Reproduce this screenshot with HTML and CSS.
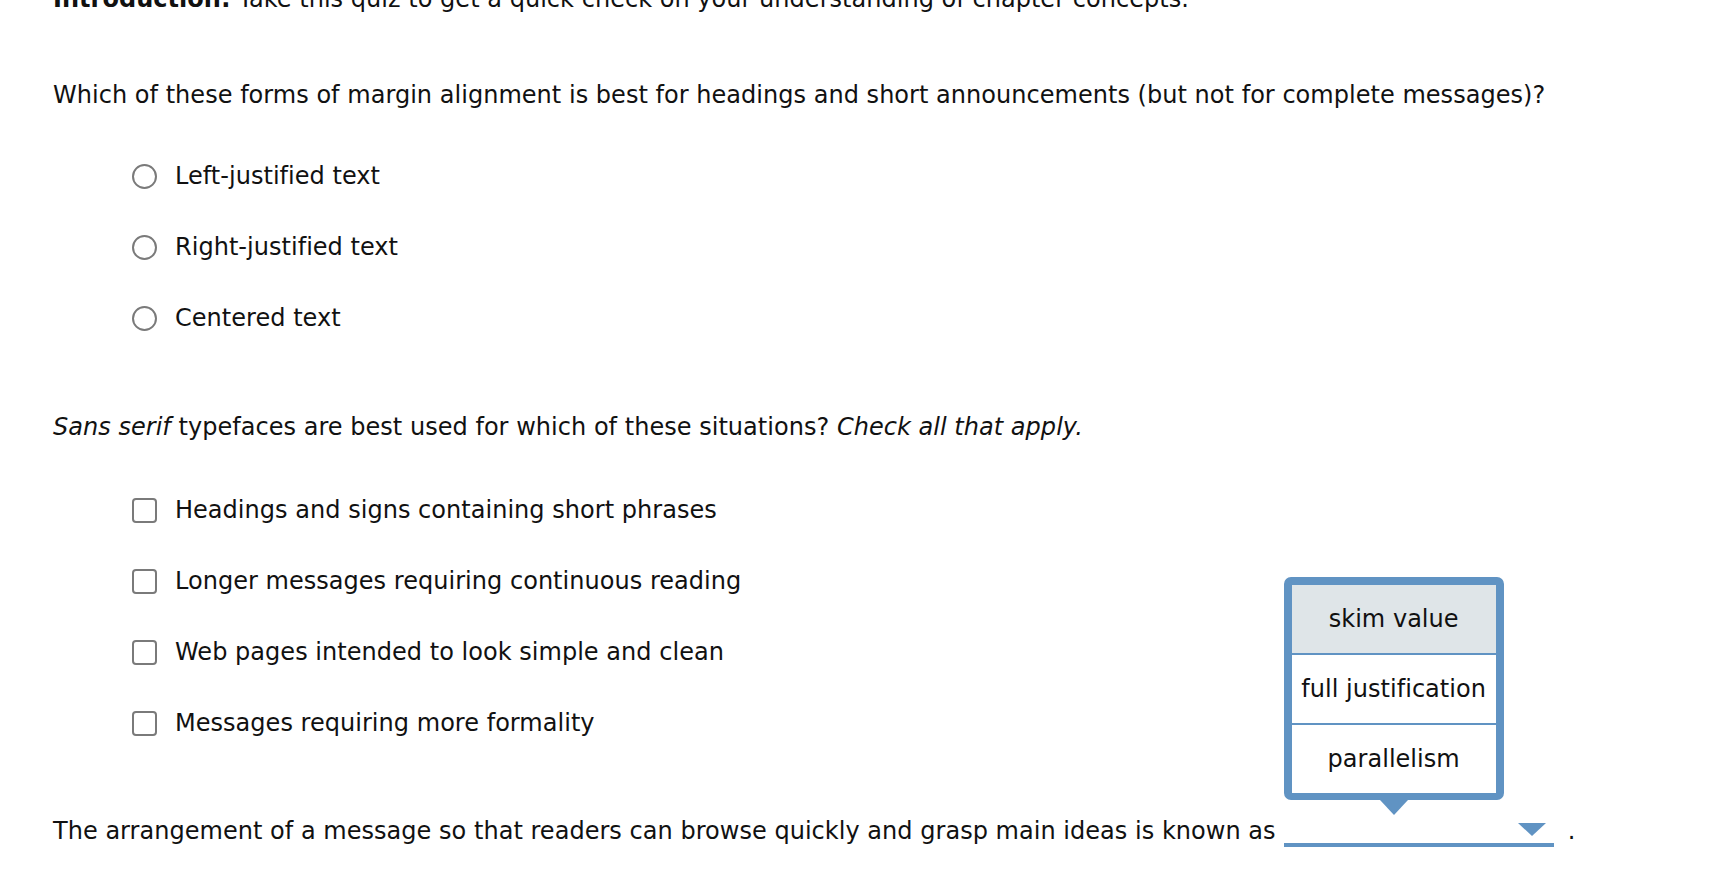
FILE: index.html
```html
<!DOCTYPE html>
<html lang="en">
<head>
<meta charset="utf-8">
<title>Quiz</title>
<link rel="stylesheet" href="styles.css">
</head>
<body>
<main class="page">
  <p class="intro"><strong>Introduction:</strong> Take this quiz to get a quick check on your understanding of chapter concepts.</p>

  <section class="question q1">
    <p class="prompt">Which of these forms of margin alignment is best for headings and short announcements (but not for complete messages)?</p>
    <ul class="options">
      <li class="option"><span class="radio"></span><span class="label">Left-justified text</span></li>
      <li class="option"><span class="radio"></span><span class="label">Right-justified text</span></li>
      <li class="option"><span class="radio"></span><span class="label">Centered text</span></li>
    </ul>
  </section>

  <section class="question q2">
    <p class="prompt"><em>Sans serif</em> typefaces are best used for which of these situations? <em>Check all that apply.</em></p>
    <ul class="options">
      <li class="option"><span class="check"></span><span class="label">Headings and signs containing short phrases</span></li>
      <li class="option"><span class="check"></span><span class="label">Longer messages requiring continuous reading</span></li>
      <li class="option"><span class="check"></span><span class="label">Web pages intended to look simple and clean</span></li>
      <li class="option"><span class="check"></span><span class="label">Messages requiring more formality</span></li>
    </ul>
  </section>

  <section class="question q3">
    <div class="sentence">
      <span class="stem">The arrangement of a message so that readers can browse quickly and grasp main ideas is known as</span>
      <span class="dropdown">
        <span class="caret"></span>
        <span class="popup">
          <span class="item selected">skim value</span>
          <span class="item">full justification</span>
          <span class="item">parallelism</span>
          <span class="pointer"></span>
        </span>
      </span>
      <span class="period">.</span>
    </div>
  </section>
</main>
</body>
</html>
```

FILE: styles.css
```css
html, body {
  margin: 0;
  padding: 0;
  background: #ffffff;
}

body {
  font-family: "DejaVu Sans", Verdana, sans-serif;
  font-size: 24px;
  line-height: 32px;
  letter-spacing: 0.03px;
  color: #111111;
  overflow: hidden;
}

.page {
  padding-left: 53px;
}

p {
  margin: 0;
}

.intro {
  margin-top: -17px;
  white-space: nowrap;
}

.q1 {
  margin-top: 64px;
}

.q2 {
  margin-top: 77px;
}

.q3 {
  margin-top: 76px;
}

.prompt {
  white-space: nowrap;
}

.options {
  list-style: none;
  margin: 0;
  padding: 0 0 0 79px;
  display: flex;
  flex-direction: column;
  gap: 39px;
}

.q1 .options {
  margin-top: 49px;
}

.q2 .options {
  margin-top: 51px;
}

.option {
  display: flex;
  align-items: center;
  height: 32px;
  gap: 18px;
}

.radio,
.check {
  flex: 0 0 auto;
  box-sizing: border-box;
  width: 25px;
  height: 25px;
  border: 2px solid #7a7a7a;
  background: #ffffff;
}

.radio {
  border-radius: 50%;
}

.check {
  border-radius: 4px;
}

.label {
  white-space: nowrap;
}

.sentence {
  display: flex;
  align-items: flex-start;
  white-space: nowrap;
}

.dropdown {
  position: relative;
  box-sizing: border-box;
  width: 270px;
  height: 32px;
  margin-left: 8px;
  border-bottom: 4px solid #6093c3;
  display: flex;
  align-items: center;
  justify-content: flex-end;
  padding-right: 8px;
}

.caret {
  width: 0;
  height: 0;
  border-left: 14px solid transparent;
  border-right: 14px solid transparent;
  border-top: 13px solid #6093c3;
}

.period {
  margin-left: 14px;
}

.popup {
  position: absolute;
  left: 0;
  bottom: 43px;
  box-sizing: border-box;
  width: 220px;
  border: 8px solid #6093c3;
  border-bottom-width: 7px;
  border-radius: 7px;
  background: #ffffff;
  display: flex;
  flex-direction: column;
}

.item {
  display: flex;
  align-items: center;
  justify-content: center;
  height: 68px;
  color: #111111;
}

.item + .item {
  border-top: 2px solid #6093c3;
}

.item.selected {
  background: #dfe5e8;
}

.pointer {
  position: absolute;
  left: 50%;
  bottom: -22px;
  margin-left: -14px;
  width: 0;
  height: 0;
  border-left: 14px solid transparent;
  border-right: 14px solid transparent;
  border-top: 15px solid #6093c3;
}
```
